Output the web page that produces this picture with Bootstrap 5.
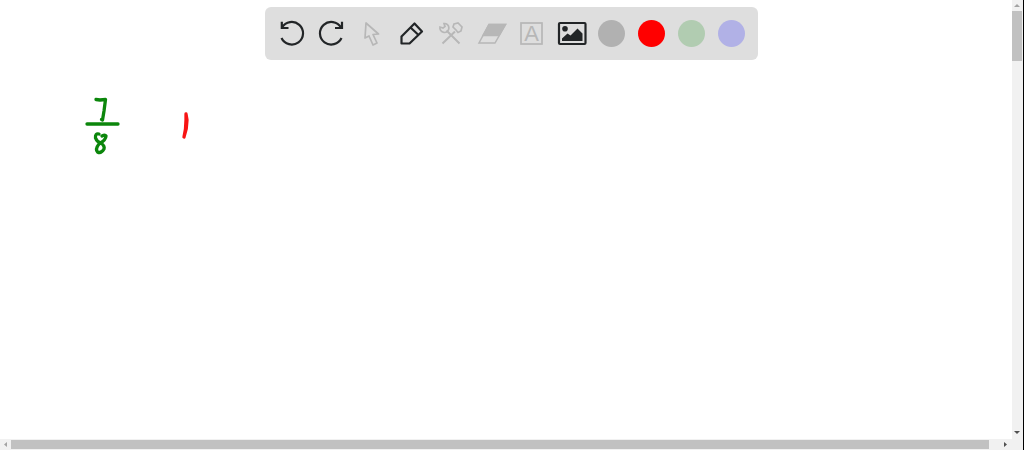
<!DOCTYPE html>
<html lang="en">
<head>
<meta charset="utf-8">
<meta name="viewport" content="width=device-width, initial-scale=1">
<title>Whiteboard</title>
<link href="https://cdn.jsdelivr.net/npm/bootstrap@5.3.0/dist/css/bootstrap.min.css" rel="stylesheet">
<style>
  body { font-family: "Liberation Sans", Arial, sans-serif; background: #fff; }
  .board { display: grid; grid-template-columns: minmax(0, 1fr) 11px; grid-template-rows: minmax(0, 1fr) 11px; border-right: 1px solid #000; }
  .toolbar-wrap { top: 7px; left: 0; right: 0; }
  .toolbar { background: #dedede; border-radius: 6px; padding: 6px 7px 6px 6px; }
  .tool { width: 40px; height: 41px; color: #222527; }
  .tool:disabled { color: #b7b7b7; opacity: 1; border: 0; }
  .tool svg, .ink { display: block; fill: none; stroke: currentColor; }
  .tool svg { width: 40px; height: 40px; stroke-width: 2.2; }
  .tool text { font: 22px "Liberation Sans", Arial, sans-serif; fill: currentColor; stroke: none; }
  .swatch { appearance: none; width: 27px; height: 27px; margin: 0 6px 0 7px; border-radius: 50%; cursor: pointer; }
  .gray { background: #b1b1b1; }
  .red { background: #ff0000; }
  .green { background: #b1ccb1; }
  .violet { background: #b1b1e6; }
  .ink { width: 240px; height: 200px; stroke-width: 3.3; stroke-linecap: round; stroke-linejoin: round; }
  .track { background: #f1f1f1; }
  .thumb { background: #c1c1c1; }
  .track-y .thumb { width: 10px; height: 50px; }
  .arrow { width: 11px; height: 11px; fill: #505050; flex: none; display: block; }
  .arrow.faded { fill: #a3a3a3; }
  .track-x .thumb { height: 9px; }
  .track-x .tail { width: 12px; }
</style>
</head>
<body>
<div class="board position-relative vh-100 overflow-hidden">
  <main class="overflow-hidden">
    <svg class="ink" viewBox="0 0 240 200" role="img" aria-label="Seven eighths, then one">
      <g stroke="#0b860b">
        <path d="M96 99.500 L100 100 L105.500 99.500 L104 111 L102.500 120 L101.500 119.500"/>
        <path d="M87 124 H118"/>
        <path d="M99 134 Q95 133 95.500 138 Q97 142 101 143 Q105 146 104 149 Q101 154 97.500 152 Q95 149 99 144 Q106 140 106 136 Q105 134.500 102 136"/>
      </g>
      <path stroke="#f81414" d="M186 114 L187 120 Q187 129 184 137 M186 114 V120 Q186 129 184 137"/>
    </svg>
  </main>
  <div class="track track-y d-flex flex-column">
    <svg class="arrow faded" viewBox="0 0 11 11"><path d="M2 7 L5 4 L8 7Z"/></svg>
    <div class="thumb"></div>
    <svg class="arrow mt-auto" viewBox="0 0 11 11"><path d="M2 3 H8 L5 6Z"/></svg>
  </div>
  <div class="track track-x d-flex align-items-center">
    <svg class="arrow faded" viewBox="0 0 11 11"><path d="M7 3 V8 L4 5.500Z"/></svg>
    <div class="thumb flex-grow-1"></div>
    <div class="tail"></div>
    <svg class="arrow" viewBox="0 0 11 11"><path d="M3 3 V8 L6 5.500Z"/></svg>
  </div>
  <div class="track"></div>

  <div class="toolbar-wrap position-absolute d-flex justify-content-center">
    <div class="toolbar d-flex align-items-center" role="toolbar" aria-label="Drawing tools">
      <button type="button" class="tool btn border-0 p-0" aria-label="Undo"><svg viewBox="0 0 40 40"><path d="M10.500 24 A11.300 11.300 0 1 0 11 13.500 M10.800 7.800 V14 H17.500"/></svg></button>
      <button type="button" class="tool btn border-0 p-0" aria-label="Redo"><svg viewBox="0 0 40 40"><path d="M30.500 24 A11.300 11.300 0 1 1 30 13.500 M31 7.800 V14 H24"/></svg></button>
      <button type="button" class="tool btn border-0 p-0" aria-label="Select" disabled><svg viewBox="0 0 40 40"><path d="M15 9 L14 24 L18 22 L22 31 L26 29 L22 20.500 L27.500 20Z" stroke-width="1.700" stroke-linejoin="round"/></svg></button>
      <button type="button" class="tool btn border-0 p-0" aria-label="Pen"><svg viewBox="0 0 40 40"><path d="M23.500 9.500 L31 17.500 L18.500 29.500 H10.500 V22.500Z M19.500 13.500 L27.500 21" stroke-linejoin="round"/></svg></button>
      <button type="button" class="tool btn border-0 p-0" aria-label="Tools" disabled><svg viewBox="0 0 40 40"><path d="M11.500 29.500 L24 17.500 M28.500 29.500 L15.500 16.500" stroke-width="2"/><path d="M13 9.500 A4.500 4.500 0 1 1 9 13 L12 14 L14 12.500Z M23 10 L27 9 L31 13 L30 17 L27 18.500 L25 16 L22 13Z" stroke-width="1.700"/></svg></button>
      <button type="button" class="tool btn border-0 p-0" aria-label="Eraser" disabled><svg viewBox="0 0 40 40"><path d="M18 10.500 H34.500 L24 29 H8Z" stroke-width="1.500"/><path d="M18 10.500 H34.500 L28 21.500 H12Z" fill="currentColor" stroke-width="1.500"/></svg></button>
      <button type="button" class="tool btn border-0 p-0" aria-label="Text" disabled><svg viewBox="0 0 40 40"><rect x="10" y="9" width="21" height="21" stroke-width="1.700"/><text x="20.500" y="27" text-anchor="middle">A</text></svg></button>
      <button type="button" class="tool btn border-0 p-0" aria-label="Image"><svg viewBox="0 0 40 40"><rect x="8" y="9" width="26.500" height="21" rx="1"/><g fill="currentColor" stroke="none"><circle cx="14" cy="14.800" r="2.800"/><path d="M11 27 V24.500 L16.500 19.500 L19.500 21.500 L26.500 14.500 L31.500 19.500 V27Z"/></g></svg></button>
      <input type="radio" name="ink" class="swatch gray" aria-label="Black">
      <input type="radio" name="ink" class="swatch red" aria-label="Red" checked>
      <input type="radio" name="ink" class="swatch green" aria-label="Green">
      <input type="radio" name="ink" class="swatch violet" aria-label="Blue">
    </div>
  </div>
</div>
<script src="https://cdn.jsdelivr.net/npm/bootstrap@5.3.0/dist/js/bootstrap.bundle.min.js"></script>
</body>
</html>
